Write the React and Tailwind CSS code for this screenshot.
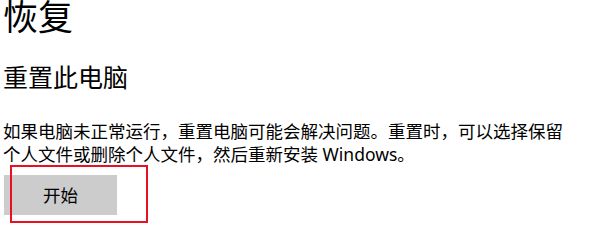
import React from "react"

function App() {
  return (
    <div className="relative w-[609px] h-[234px] overflow-hidden bg-white text-black font-['Noto_Sans','Noto_Sans_CJK_SC',sans-serif]">
      <div className="flex flex-col items-start pl-[3px]">
        <h1 className="-mt-px text-[35px] leading-[35px] font-normal">恢复</h1>
        <h2 className="mt-[31px] text-[25px] leading-[25px] font-normal">重置此电脑</h2>
        <p className="mt-[30px] w-[566px] text-[17.5px] leading-[23px]">
          如果电脑未正常运行，重置电脑可能会解决问题。重置时，可以选择保留个人文件或删除个人文件，然后重新安装 Windows。
        </p>
        <button className="mt-[9px] ml-px flex h-[40px] w-[113px] items-center justify-center bg-[#cccccc] text-[17.5px]">
          开始
        </button>
      </div>

      {/* red highlight box */}
      <div className="absolute left-[10px] top-[165px] h-[58px] w-[138px] border-2 border-[#e81123]" />
    </div>
  )
}

export default App
